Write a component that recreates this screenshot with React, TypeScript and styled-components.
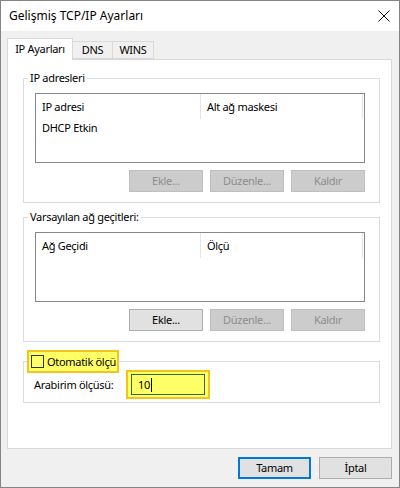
import styled, { createGlobalStyle } from 'styled-components'

const GlobalStyle = createGlobalStyle`
  html, body {
    margin: 0;
    padding: 0;
    background: #f0f0f0;
  }
  * {
    box-sizing: border-box;
  }
`

const Window = styled.div`
  width: 400px;
  height: 488px;
  border: 1px solid #858585;
  background: #f0f0f0;
  display: flex;
  flex-direction: column;
  font-family: "Noto Sans", "DejaVu Sans", sans-serif;
  font-size: 11px;
  letter-spacing: -0.3px;
  color: #000;
`

const TitleBar = styled.div`
  height: 30px;
  background: #ffffff;
  display: flex;
  align-items: center;
  justify-content: space-between;
  padding: 0 9px 0 8px;
`

const TitleText = styled.span`
  font-size: 12px;
  letter-spacing: 0;
  line-height: 16px;
`

const Body = styled.div`
  flex: 1;
  padding: 7px 7px 0 6px;
  display: flex;
  flex-direction: column;
`

const TabStrip = styled.div`
  height: 21px;
  display: flex;
  align-items: flex-end;
  position: relative;
  z-index: 1;
`

const Tab = styled.div<{ $active?: boolean; $width: number }>`
  width: ${(p) => p.$width}px;
  height: ${(p) => (p.$active ? 22 : 18)}px;
  margin-bottom: ${(p) => (p.$active ? -1 : 0)}px;
  margin-left: ${(p) => (p.$active ? 0 : -1)}px;
  border: 1px solid #d9d9d9;
  border-bottom: ${(p) => (p.$active ? 'none' : '1px solid #d9d9d9')};
  background: ${(p) => (p.$active ? '#ffffff' : '#f0f0f0')};
  position: relative;
  z-index: ${(p) => (p.$active ? 2 : 1)};
  display: flex;
  align-items: center;
  justify-content: center;
  line-height: 16px;
  padding-bottom: ${(p) => (p.$active ? 1 : 0)}px;
`

const Panel = styled.div`
  height: 390px;
  background: #ffffff;
  border: 1px solid #d9d9d9;
  padding: 0 11px 0 15px;
  display: flex;
  flex-direction: column;
`

const GroupBox = styled.div<{ $top: number; $bottom?: number }>`
  margin-top: ${(p) => p.$top}px;
  border: 1px solid #dcdcdc;
  padding: 0 14px ${(p) => p.$bottom ?? 10}px 11px;
  display: flex;
  flex-direction: column;
`

const GroupTitle = styled.span`
  align-self: flex-start;
  margin: -9px 0 0 -7px;
  padding: 0 2px;
  background: #ffffff;
  line-height: 16px;
`

const ListView = styled.div`
  margin-top: 7px;
  height: 70px;
  border: 1px solid #828790;
  background: #ffffff;
  display: flex;
  flex-direction: column;
`

const ListHeader = styled.div`
  height: 25px;
  display: flex;
`

const HeaderCell = styled.div<{ $width: number }>`
  width: ${(p) => p.$width}px;
  border-right: 1px solid #e5e5e5;
  padding-left: 6px;
  display: flex;
  align-items: center;
  line-height: 16px;
`

const ListRow = styled.div`
  height: 18px;
  padding-left: 6px;
  display: flex;
  align-items: center;
  line-height: 16px;
`

const ButtonRow = styled.div`
  margin-top: 7px;
  display: flex;
  justify-content: flex-end;
  gap: 7px;
`

const PushButton = styled.button<{ $width?: number; $default?: boolean }>`
  width: ${(p) => p.$width ?? 74}px;
  height: 22px;
  padding: 0;
  font: inherit;
  letter-spacing: inherit;
  line-height: 16px;
  color: #000;
  background: #e1e1e1;
  border: ${(p) => (p.$default ? '2px solid #0078d7' : '1px solid #adadad')};

  &:disabled {
    background: #cccccc;
    border-color: #bfbfbf;
    color: #8d8d8d;
  }
`

const CheckTitle = styled.label`
  align-self: flex-start;
  height: 23px;
  margin: -12px 0 -3px -8px;
  padding: 0 1px 0 2px;
  background: #ffff66;
  border: 2px solid #f3c51c;
  display: flex;
  align-items: center;
  gap: 3px;
  line-height: 16px;
`

const CheckSquare = styled.span`
  width: 13px;
  height: 13px;
  border: 1px solid #333333;
`

const MetricRow = styled.div`
  display: flex;
  align-items: center;
  margin-left: -1px;
`

const FieldLabel = styled.span`
  width: 92px;
  line-height: 16px;
`

const InputHighlight = styled.div`
  width: 84px;
  height: 29px;
  padding: 2px 3px;
  background: #ffff66;
  border: 2px solid #f3c51c;
`

const InputBox = styled.div`
  height: 21px;
  border: 1px solid #2b6b46;
  padding-left: 6px;
  display: flex;
  align-items: center;
  line-height: 16px;
`

const Caret = styled.span`
  width: 1px;
  height: 14px;
  background: #000;
  margin-left: 1px;
`

const Footer = styled.div`
  margin-top: 8px;
  display: flex;
  justify-content: flex-end;
  gap: 8px;
`

function CloseIcon() {
  return (
    <svg width="12" height="12" viewBox="0 0 12 12">
      <path d="M0.5 0.5 L11.5 11.5 M11.5 0.5 L0.5 11.5" stroke="#111" strokeWidth="1" fill="none" />
    </svg>
  )
}

export default function App() {
  return (
    <>
      <GlobalStyle />
      <Window>
        <TitleBar>
          <TitleText>Gelişmiş TCP/IP Ayarları</TitleText>
          <CloseIcon />
        </TitleBar>
        <Body>
          <TabStrip>
            <Tab $active $width={66}>IP Ayarları</Tab>
            <Tab $width={41}>DNS</Tab>
            <Tab $width={42}>WINS</Tab>
          </TabStrip>
          <Panel>
            <GroupBox $top={18}>
              <GroupTitle>IP adresleri</GroupTitle>
              <ListView>
                <ListHeader>
                  <HeaderCell $width={165}>IP adresi</HeaderCell>
                  <HeaderCell $width={162}>Alt ağ maskesi</HeaderCell>
                </ListHeader>
                <ListRow>DHCP Etkin</ListRow>
              </ListView>
              <ButtonRow>
                <PushButton disabled>Ekle...</PushButton>
                <PushButton disabled>Düzenle...</PushButton>
                <PushButton disabled>Kaldır</PushButton>
              </ButtonRow>
            </GroupBox>

            <GroupBox $top={14}>
              <GroupTitle>Varsayılan ağ geçitleri:</GroupTitle>
              <ListView>
                <ListHeader>
                  <HeaderCell $width={165}>Ağ Geçidi</HeaderCell>
                  <HeaderCell $width={162}>Ölçü</HeaderCell>
                </ListHeader>
              </ListView>
              <ButtonRow>
                <PushButton>Ekle...</PushButton>
                <PushButton disabled>Düzenle...</PushButton>
                <PushButton disabled>Kaldır</PushButton>
              </ButtonRow>
            </GroupBox>

            <GroupBox $top={19} $bottom={3}>
              <CheckTitle>
                <CheckSquare />
                Otomatik ölçü
              </CheckTitle>
              <MetricRow>
                <FieldLabel>Arabirim ölçüsü:</FieldLabel>
                <InputHighlight>
                  <InputBox>
                    10
                    <Caret />
                  </InputBox>
                </InputHighlight>
              </MetricRow>
            </GroupBox>
          </Panel>
          <Footer>
            <PushButton $default $width={73}>Tamam</PushButton>
            <PushButton $width={73}>İptal</PushButton>
          </Footer>
        </Body>
      </Window>
    </>
  )
}
